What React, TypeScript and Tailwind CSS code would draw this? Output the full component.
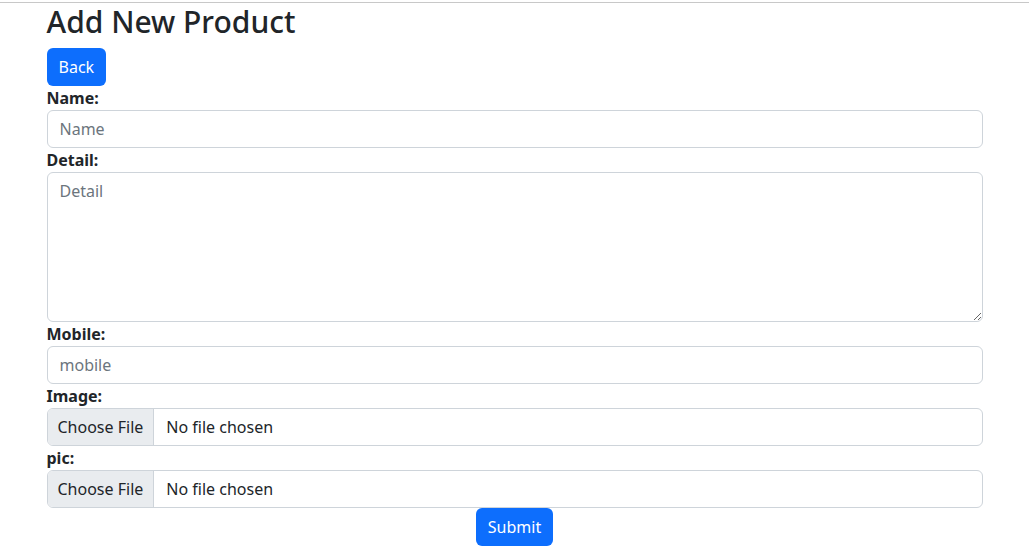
import { useState } from "react";

const FONT = "font-['Noto_Sans',sans-serif]";

function Field({ label, children }: { label: string; children: React.ReactNode }) {
  return (
    <div className="flex flex-col">
      <strong className="text-base leading-6 font-bold text-[#212529]">{label}</strong>
      {children}
    </div>
  );
}

const inputCls =
  "block w-full h-[38px] px-3 py-1.5 text-base text-[#212529] bg-white border border-[#ced4da] rounded-md placeholder:text-[#6c757d] focus:outline-none";

const fileCls =
  "block w-full h-[38px] text-base text-[#212529] bg-white border border-[#ced4da] rounded-md overflow-hidden file:h-full file:mr-3 file:px-[10px] file:border-0 file:border-r file:border-solid file:border-[#ced4da] file:bg-[#e9ecef] file:text-[#212529] file:text-base file:font-['Noto_Sans',sans-serif] file:rounded-none";

export default function App() {
  const [name, setName] = useState("");
  const [detail, setDetail] = useState("");
  const [mobile, setMobile] = useState("");

  return (
    <div className={`min-h-screen bg-white ${FONT}`}>
      <div className="h-[3px] border-b border-[#c8c8c8]" />
      <div className="max-w-[960px] mx-auto px-3">
        <h1 className="text-[30px] leading-[37px] font-medium text-[#212529] mb-2">Add New Product</h1>
        <button className="h-[38px] px-3 text-base text-white bg-[#0d6efd] rounded-md">Back</button>
        <form className="flex flex-col">
          <Field label="Name:">
            <input
              type="text"
              value={name}
              onChange={(e) => setName(e.target.value)}
              placeholder="Name"
              className={inputCls}
            />
          </Field>
          <Field label="Detail:">
            <textarea
              value={detail}
              onChange={(e) => setDetail(e.target.value)}
              placeholder="Detail"
              className="block w-full h-[150px] px-3 py-1.5 text-base leading-6 text-[#212529] bg-white border border-[#ced4da] rounded-md placeholder:text-[#6c757d] focus:outline-none"
            />
          </Field>
          <Field label="Mobile:">
            <input
              type="text"
              value={mobile}
              onChange={(e) => setMobile(e.target.value)}
              placeholder="mobile"
              className={inputCls}
            />
          </Field>
          <Field label="Image:">
            <input type="file" className={fileCls} />
          </Field>
          <Field label="pic:">
            <input type="file" className={fileCls} />
          </Field>
          <div className="flex justify-center">
            <button type="submit" className="h-[38px] px-3 text-base text-white bg-[#0d6efd] rounded-md">
              Submit
            </button>
          </div>
        </form>
      </div>
    </div>
  );
}
